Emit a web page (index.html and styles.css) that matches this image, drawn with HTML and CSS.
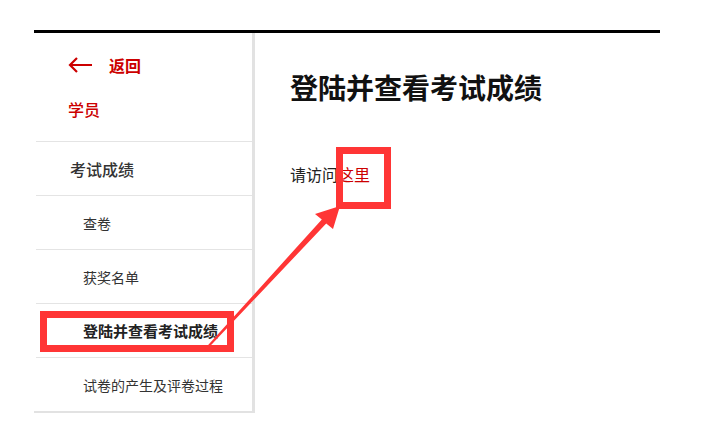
FILE: index.html
```html
<!DOCTYPE html>
<html lang="zh-CN">
<head>
<meta charset="utf-8">
<title>登陆并查看考试成绩</title>
<link rel="stylesheet" href="styles.css">
</head>
<body>
<div class="page">
  <aside class="sidebar">
    <div class="side-head">
      <a class="back" href="#">
        <svg class="back-icon" width="24" height="18" viewBox="0 0 24 18" aria-hidden="true">
          <path d="M24 9H2M9 2L2 9l7 7" fill="none" stroke="#cc0000" stroke-width="2.2"/>
        </svg>
        <span>返回</span>
      </a>
      <div class="role">学员</div>
    </div>
    <ul class="menu">
      <li class="menu-group">考试成绩</li>
      <li class="menu-item">查卷</li>
      <li class="menu-item">获奖名单</li>
      <li class="menu-item active">登陆并查看考试成绩</li>
      <li class="menu-item">试卷的产生及评卷过程</li>
    </ul>
  </aside>
  <main class="content">
    <h1 class="title">登陆并查看考试成绩</h1>
    <p class="text">请访问<a class="link" href="#">这里</a></p>
  </main>
</div>

<!-- callout markers drawn over the page -->
<svg class="callouts" width="709" height="435" viewBox="0 0 709 435" aria-hidden="true">
  <rect x="43.5" y="314.5" width="187" height="34" fill="none" stroke="#ff3535" stroke-width="7"/>
  <rect x="339.5" y="150.5" width="48" height="55" fill="none" stroke="#ff3535" stroke-width="7"/>
  <polygon fill="#ff3535" points="204.3,349.3 321.8,219.5 315,214 340,206 333,229 326.2,223.5 205.7,350.7"/>
</svg>
</body>
</html>
```

FILE: styles.css
```css
html, body {
  margin: 0;
  padding: 0;
  background: #fff;
}

body {
  font-family: "Noto Sans CJK SC", "Noto Sans", sans-serif;
  color: #333;
  position: relative;
  width: 709px;
  height: 435px;
  overflow: hidden;
}

.page {
  margin: 30px 0 0 34px;
  width: 626px;
  border-top: 3px solid #000;
  display: flex;
  align-items: flex-start;
}

.sidebar {
  width: 218px;
  flex: none;
  border-right: 3px solid #e2e2e2;
  border-bottom: 2px solid #e2e2e2;
}

.side-head {
  padding: 20px 0 20px 34px;
  display: flex;
  flex-direction: column;
  gap: 20px;
}

.back {
  display: flex;
  align-items: center;
  height: 24px;
  color: #cc0000;
  text-decoration: none;
  font-size: 16px;
  font-weight: 700;
}

.back-icon {
  display: block;
  margin-right: 17px;
}

.role {
  height: 24px;
  line-height: 24px;
  color: #cc0000;
  font-size: 16px;
  font-weight: 500;
}

.menu {
  list-style: none;
  margin: 0 0 0 2px;
  padding: 0;
}

.menu li {
  border-top: 1px solid #e4e4e4;
  height: 53px;
  display: flex;
  align-items: center;
}

.menu-group {
  padding-left: 34px;
  font-size: 16px;
  font-weight: 500;
  color: #333;
}

.menu-item {
  padding-left: 47px;
  font-size: 14px;
  color: #333;
}

.menu-item.active {
  font-weight: 700;
  font-size: 15px;
  color: #222;
}

.content {
  flex: 1;
  padding: 34px 0 0 35px;
}

.title {
  margin: 0;
  font-size: 28px;
  line-height: 40px;
  font-weight: 700;
  color: #111;
}

.text {
  margin: 55px 0 0;
  font-size: 16px;
  line-height: 24px;
  color: #222;
}

.link {
  color: #cc0000;
  text-decoration: none;
}

.callouts {
  position: absolute;
  left: 0;
  top: 0;
  pointer-events: none;
}
```
